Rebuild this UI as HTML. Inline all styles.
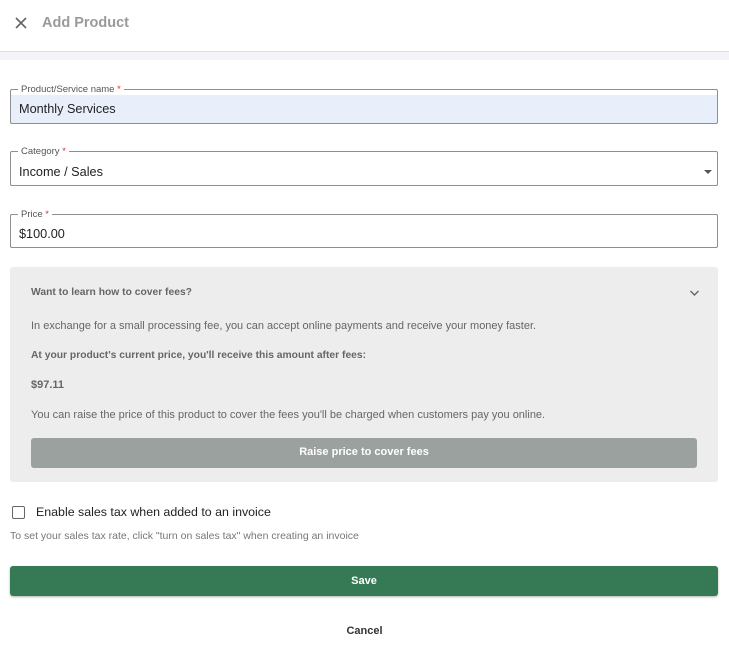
<!DOCTYPE html>
<html><head><style>
body{margin:0;width:729px;height:651px;background:#fff;font-family:"Liberation Sans",Arial,sans-serif;position:relative;overflow:hidden}
.a{position:absolute}
fieldset{position:absolute;left:10px;width:708px;margin:0;padding:0;border:1px solid #8a8f8f;box-sizing:border-box;border-radius:2px}
legend{font-size:9.5px;color:#555;margin-left:7px;padding:0 3px;line-height:9px}
legend span{color:#d33}
.v{position:absolute;left:8px;font-size:12.7px;color:#222}
p{margin:0;position:absolute;left:31px;font-size:11px;color:#666}
p.b{font-size:10.3px;font-weight:bold}
</style></head><body>
<svg class="a" style="left:14px;top:16px" width="14" height="14" viewBox="0 0 14 14"><path d="M2 2L12 12M12 2L2 12" stroke="#666" stroke-width="1.6"/></svg>
<div class="a" style="left:42px;top:15px;font-size:14.5px;font-weight:bold;color:#9a9a9a">Add Product</div>
<div class="a" style="left:0;top:51px;width:729px;height:1px;background:#dcdce4"></div>
<div class="a" style="left:0;top:52px;width:729px;height:8px;background:#f4f4f8"></div>
<fieldset style="top:85px;height:39px;background:linear-gradient(#fff 0,#fff 5px,#e8effb 5px)"><legend>Product/Service name <span>*</span></legend><div class="v" style="top:8px">Monthly Services</div></fieldset>
<fieldset style="top:147px;height:39px"><legend>Category <span>*</span></legend><div class="v" style="top:9px">Income / Sales</div>
<div class="a" style="right:5px;top:14px;width:0;height:0;border-left:4px solid transparent;border-right:4px solid transparent;border-top:4px solid #555"></div></fieldset>
<fieldset style="top:210px;height:38px"><legend>Price <span>*</span></legend><div class="v" style="top:8px">$100.00</div></fieldset>
<div class="a" style="left:10px;top:267px;width:708px;height:215px;background:#ededed;border-radius:3px"></div>
<p class="b" style="top:287px">Want to learn how to cover fees?</p>
<svg class="a" style="left:689px;top:289px" width="11" height="8" viewBox="0 0 11 8"><path d="M1.5 2L5.5 6L9.5 2" stroke="#666" stroke-width="1.4" fill="none"/></svg>
<p style="top:320px">In exchange for a small processing fee, you can accept online payments and receive your money faster.</p>
<p class="b" style="top:350px">At your product's current price, you'll receive this amount after fees:</p>
<p class="b" style="top:379px;font-size:11px">$97.11</p>
<p style="top:409px">You can raise the price of this product to cover the fees you'll be charged when customers pay you online.</p>
<div class="a" style="left:31px;top:438px;width:666px;height:30px;background:#9aa19f;border-radius:3px;color:#fff;font-size:11px;font-weight:bold;text-align:center;line-height:29px">Raise price to cover fees</div>
<div class="a" style="left:12px;top:506px;width:11px;height:11px;border:1.5px solid #666;border-radius:2px"></div>
<div class="a" style="left:36px;top:505px;font-size:12.4px;color:#222">Enable sales tax when added to an invoice</div>
<div class="a" style="left:10px;top:530px;font-size:10.5px;color:#777">To set your sales tax rate, click "turn on sales tax" when creating an invoice</div>
<div class="a" style="left:10px;top:566px;width:708px;height:30px;background:#357a55;border-radius:3px;color:#fff;font-size:11px;font-weight:bold;text-align:center;line-height:30px;box-shadow:0 1px 2px rgba(0,0,0,.3)">Save</div>
<div class="a" style="left:0;top:625px;width:729px;text-align:center;font-size:11px;font-weight:bold;color:#333">Cancel</div>
</body></html>
